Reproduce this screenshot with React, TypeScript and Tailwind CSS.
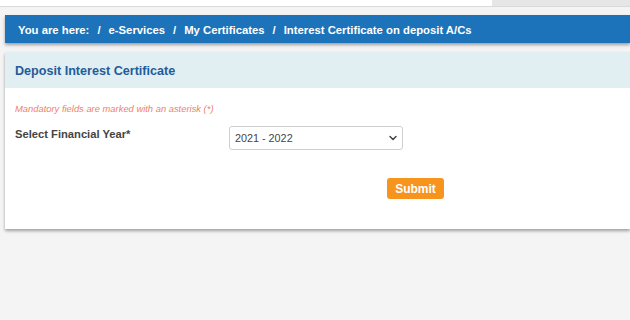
import { ChevronDown } from "lucide-react";

const CRUMBS = ["e-Services", "My Certificates", "Interest Certificate on deposit A/Cs"];

export default function App() {
  return (
    <div className="min-h-screen w-full bg-[#f4f4f4] font-['Liberation_Sans',Arial,sans-serif] overflow-hidden">
      {/* top strip */}
      <div className="flex h-[7px] border-b border-[#dadada]">
        <div className="w-[492px] bg-white" />
        <div className="flex-1 bg-[#e6e6e6]" />
      </div>

      <div className="pl-[5px] pt-[8px]">
        {/* breadcrumb */}
        <div className="flex h-[28px] items-center bg-[#1c73b9] pl-[13px] pt-[2px] text-[11.3px] font-bold text-white shadow-[0_2px_3px_rgba(0,0,0,0.35)] whitespace-nowrap">
          <span>You are here:</span>
          {CRUMBS.map((c) => (
            <span key={c} className="flex items-center">
              <span className="mx-[8px]">/</span>
              <span>{c}</span>
            </span>
          ))}
        </div>

        {/* card */}
        <div className="mt-[9px] bg-white shadow-[0_2px_3px_rgba(0,0,0,0.35)]">
          <div className="flex h-[36px] items-center bg-[#e1eef2] pl-[10px] pt-[2px] text-[12.6px] font-bold text-[#1f5c99]">
            Deposit Interest Certificate
          </div>
          <div className="pl-[10px] pt-[14px] pb-[30px]">
            <p className="text-[9.4px] italic text-[#f0806d]">
              Mandatory fields are marked with an asterisk (*)
            </p>
            <div className="mt-[10px] flex items-start">
              <label className="w-[214px] text-[11.2px] font-bold text-[#444]">
                Select Financial Year*
              </label>
              <div className="flex h-[24px] w-[174px] items-center justify-between rounded-[3px] border border-[#cfcfcf] pl-[5px] pr-[3px] text-[10.8px] text-[#444]">
                <span>2021 - 2022</span>
                <ChevronDown className="h-[12px] w-[12px] text-[#444]" strokeWidth={3} />
              </div>
            </div>
            <div className="mt-[28px] flex pl-[372px]">
              <button className="h-[21px] w-[57px] rounded-[3px] bg-[#f7941d] text-[12px] font-bold text-white">
                Submit
              </button>
            </div>
          </div>
        </div>
      </div>
    </div>
  );
}
